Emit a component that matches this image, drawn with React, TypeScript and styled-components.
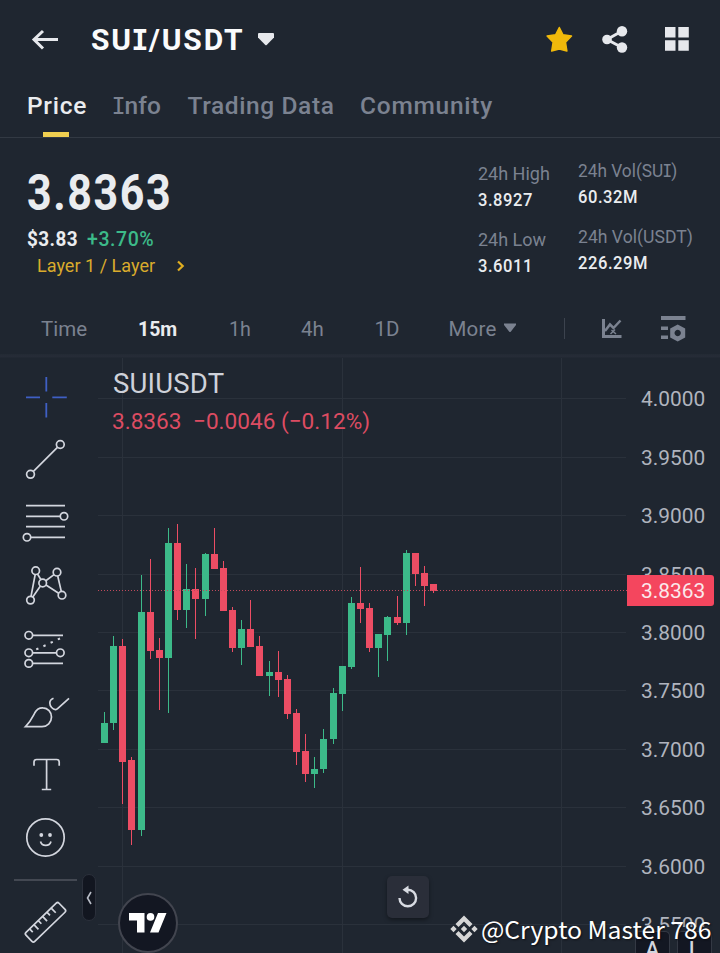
import React from "react";
import styled, { createGlobalStyle } from "styled-components";

const GlobalStyle = createGlobalStyle`
  * { box-sizing: border-box; }
  html, body { margin: 0; padding: 0; background: #1f2630; }
  body { font-family: Roboto, "Noto Sans", sans-serif; color: #eaecef; }
  svg { display: block; flex: none; }
`;

const Screen = styled.div`
  width: 720px;
  height: 953px;
  overflow: hidden;
  display: flex;
  flex-direction: column;
  background: #1f2630;
`;

/* Single-line label whose glyph width and tracking can be tuned. */
const Label = styled.span<{ $size: number; $weight?: number; $color?: string; $sx?: number; $ls?: number }>`
  display: block;
  white-space: pre;
  transform-origin: 0 50%;
  font-size: ${(p) => p.$size}px;
  font-weight: ${(p) => p.$weight ?? 400};
  color: ${(p) => p.$color ?? "#eaecef"};
  letter-spacing: ${(p) => p.$ls ?? 0}px;
  transform: scaleX(${(p) => p.$sx ?? 1});
`;

const SlabI = styled.span`
  font-family: "DejaVu Sans Mono", monospace;
  font-size: 0.96em;
  line-height: 0;
  margin: 0 -0.06em;
`;

const Header = styled.header`
  height: 79px;
  margin-bottom: 1px;
  flex: none;
  display: grid;
  grid-template-columns: 60px 167px 288px 56px 63px 30px;
  padding-left: 31px;
  align-items: center;
`;

const Tabs = styled.nav`
  height: 58px;
  flex: none;
  display: grid;
  grid-template-columns: 86px 74.5px 172.5px 160px;
  padding-left: 27px;
  border-bottom: 1px solid #323943;
`;

const Tab = styled.div`
  height: 57px;
  line-height: 51px;
  display: flex;
  flex-direction: column;
`;

const TabMark = styled.div`
  width: 26px;
  height: 5px;
  flex: none;
  margin: 1px 0 0 16px;
  background: #f0cf50;
`;

const Summary = styled.section`
  height: 162px;
  flex: none;
  display: grid;
  grid-template-columns: 451px 100px 140px;
  padding-left: 27px;
`;

const PriceColumn = styled.div`
  padding-top: 25px;
`;

const BigPrice = styled.div`
  height: 60px;
  line-height: 60px;
  margin-bottom: 2px;
`;

const ChangeRow = styled.div`
  display: grid;
  grid-template-columns: 60px 80px;
  line-height: 28px;
`;

const TagRow = styled.div`
  display: grid;
  grid-template-columns: 139px 10px;
  align-items: center;
  line-height: 26px;
  padding-left: 10px;
`;

const StatColumn = styled.div<{ $top: number }>`
  display: flex;
  flex-direction: column;
  gap: 14px;
  padding-top: ${(p) => p.$top}px;
  line-height: 26px;
`;

const Intervals = styled.div`
  height: 54px;
  flex: none;
  display: grid;
  grid-template-columns: 97px 90.5px 72.5px 73.5px 74px 55.5px 60px 38px 59px 30px;
  align-items: center;
  padding: 3px 0 0 41px;
`;

const Divider = styled.div`
  width: 1px;
  height: 21px;
  background: #3c434e;
`;

const Strip = styled.div`
  height: 4px;
  flex: none;
  background: linear-gradient(#232a34, #262c37 60%, #202731);
`;

const ChartPanel = styled.main`
  height: 595px;
  flex: none;
  display: grid;
  grid-template-columns: 98px 529px 93px;
  position: relative;
`;

const Tools = styled.aside`
  padding-top: 8px;
  svg { fill: none; stroke: #d3d6de; stroke-width: 1.7; }
`;

const ToolDivider = styled.div`
  height: 2px;
  width: 63px;
  margin: 9px 0 0 14px;
  background: #434852;
`;

const Collapse = styled.div`
  position: absolute;
  left: 82px;
  top: 516px;
  width: 14px;
  height: 47px;
  border-radius: 7px;
  background: #121620;
  border: 1px solid #2b303b;
  display: grid;
  place-items: center;
`;

const Legend = styled.div`
  position: absolute;
  left: 112px;
  top: 8px;
`;

const LegendTitle = styled.div`
  line-height: 36px;
  padding-left: 1px;
`;

const LegendValues = styled.div`
  display: grid;
  grid-template-columns: 81px 190px;
  line-height: 40px;
`;

const Scale = styled.div`
  display: grid;
  grid-template-rows: repeat(10, 58.44px);
  align-content: start;
  align-items: center;
  padding: 12px 0 0 14px;
  overflow: hidden;
`;

const PriceTag = styled.div`
  position: absolute;
  left: 627px;
  top: 217px;
  width: 87px;
  height: 31px;
  line-height: 32px;
  padding-left: 14px;
  border-radius: 0 3px 3px 0;
  background: #f4465e;
`;

const RoundLogo = styled.div`
  position: absolute;
  left: 118px;
  top: 535px;
  width: 60px;
  height: 60px;
  border-radius: 50%;
  background: #131722;
  border: 2px solid #42454f;
  display: grid;
  place-items: center;
`;

const ResetButton = styled.div`
  position: absolute;
  left: 387px;
  top: 518px;
  width: 42px;
  height: 42px;
  border-radius: 5px;
  background: #2a2e39;
  box-shadow: 0 2px 4px rgba(0, 0, 0, 0.4);
  display: grid;
  place-items: center;
`;

const ScaleModes = styled.div`
  position: absolute;
  left: 627px;
  right: 0;
  top: 569px;
  padding: 4px 0 0 8px;
  background: #1f2630;
  display: flex;
  gap: 7px;
`;

const ModeButton = styled.div`
  width: 35px;
  height: 22px;
  padding-top: 5px;
  overflow: hidden;
  border-radius: 5px 5px 0 0;
  border: 1px solid #343944;
  border-bottom: 0;
  background: #131722;
  color: #d3d6de;
  font-size: 20px;
  font-weight: 500;
  line-height: 24px;
  text-align: center;
`;

const Watermark = styled.div`
  position: absolute;
  left: 450px;
  top: 551px;
  height: 40px;
  display: flex;
  align-items: center;
  gap: 3px;
  line-height: 38px;
  font-family: "Noto Sans CJK SC", "Noto Sans", sans-serif;
  text-shadow: 1px 1px 2px rgba(0, 0, 0, 0.6);
`;

const GREEN = "#3cba89";
const RED = "#ec4d64";
const MUTED = "#7b8290";

/* left edge, body top, body bottom, wick top, wick bottom, rising */
const candles: [number, number, number, number, number, boolean][] = [
  [101, 723, 743, 712, 743, true],
  [110, 646, 723, 636, 730, true],
  [119, 646, 762, 639, 804, false],
  [128, 760, 830, 757, 845, false],
  [138, 612, 830, 575, 836, true],
  [147, 612, 651, 559, 659, false],
  [156, 650, 658, 638, 710, false],
  [165, 543, 658, 528, 713, true],
  [174, 543, 610, 524, 620, false],
  [183, 589, 610, 564, 628, true],
  [192, 589, 599, 568, 639, false],
  [202, 554, 599, 553, 616, true],
  [211, 554, 569, 528, 569, false],
  [220, 568, 611, 561, 611, false],
  [229, 610, 648, 607, 652, false],
  [238, 629, 648, 620, 665, true],
  [247, 629, 647, 600, 647, false],
  [256, 646, 676, 636, 676, false],
  [266, 672, 676, 661, 696, true],
  [275, 672, 680, 651, 697, false],
  [284, 679, 714, 675, 719, false],
  [293, 713, 752, 709, 765, false],
  [302, 751, 774, 734, 782, false],
  [311, 769, 774, 757, 788, true],
  [320, 739, 769, 729, 773, true],
  [330, 693, 739, 688, 744, true],
  [339, 666, 694, 666, 711, true],
  [348, 603, 667, 597, 669, true],
  [357, 603, 609, 567, 623, false],
  [366, 608, 648, 603, 652, false],
  [375, 634, 648, 634, 677, true],
  [384, 617, 635, 616, 661, true],
  [394, 617, 623, 596, 625, false],
  [403, 553, 623, 550, 635, true],
  [412, 553, 574, 553, 586, false],
  [421, 573, 586, 566, 606, false],
  [430, 584, 591, 584, 593, false],
];

const gridY = [398, 457, 515, 574, 632, 690, 749, 807, 866, 924];
const gridX = [122, 342, 561];
const scaleLabels = ["4.0000", "3.9500", "3.9000", "3.8500", "3.8000", "3.7500", "3.7000", "3.6500", "3.6000", "3.5500"];

const Chart = () => (
  <svg width="529" height="595" viewBox="98 358 529 595" shapeRendering="crispEdges">
    {gridY.map((y) => <rect key={y} x="98" y={y} width="528" height="1" fill="#2a313b" />)}
    {gridX.map((x) => <rect key={x} x={x} y="358" width="1" height="595" fill="#2a313b" />)}
    {candles.map(([x, t, b, wt, wb, up]) => (
      <g key={x} fill={up ? GREEN : RED}>
        <rect x={x + 3} y={wt} width="1" height={wb - wt} />
        <rect x={x} y={t} width="7" height={b - t} />
      </g>
    ))}
    <path d="M98 590.5H627" stroke="#c04a5c" strokeDasharray="1 2" />
  </svg>
);

const toolIcons = [
  <g stroke="#3f5fc4" strokeWidth="1.8"><path d="M46.3 11v14.5M46.3 37v14.5M26 31.3h14M52.3 31.3h14.5" /></g>,
  <g><circle cx="60.3" cy="15.5" r="3.9" /><circle cx="30.5" cy="45.3" r="3.9" /><path d="M57.4 18.4 33.4 42.4" /></g>,
  <g><path d="M26 13.7h39M26 24.3h34M26 34.7h39M31 45.3h34" /><circle cx="64" cy="24.3" r="3.7" /><circle cx="27" cy="45.3" r="3.7" /></g>,
  <g>
    <circle cx="35.7" cy="15.7" r="3.8" /><circle cx="57" cy="17.2" r="3.8" /><circle cx="42.7" cy="28" r="3.8" /><circle cx="30.5" cy="45.1" r="3.8" /><circle cx="62" cy="40.2" r="3.8" />
    <path d="M35.2 19.5 31 41.3M32.8 42 40.4 31M45.8 25.7 54 19.6M57.7 21 61.3 36.4M46 30 58.7 38.2M37.5 19 41 24.7" />
  </g>,
  <g>
    <path d="M33 17.3h30M33 34.8h23.5M33 45.4h30" /><circle cx="28.8" cy="17.3" r="3.8" /><circle cx="28.8" cy="34.8" r="3.8" /><circle cx="28.8" cy="45.4" r="3.8" /><circle cx="60.3" cy="34.8" r="3.8" />
    <path d="m36.2 31.4 2.2-.9M43.4 28.2l2.2-.9M50.6 24.8l2.2-.9M57.8 21.4l2.2-.9" strokeWidth="2" />
  </g>,
  <g><path d="M25.5 45.6C31 40 32.5 36 34.8 31.8 37 28 40 26.7 43 26.9c4.8.2 8.5 4.1 8.5 9.1 0 5.4-4.2 9.6-9.5 9.6zM53.5 17.3c-2 .8-3.7 2.5-3.7 4.7 0 3.4 3 6.5 5.7 6.6 1 .1 1.7-.5 2.4-1.2L69 17.300" /></g>,
  <g><path d="M34 21.7v-3.6q0-2.600 2.600-2.600h20q2.600 0 2.600 2.600v3.600M46.600 15.500v30M41.800 45.500h9.400" /></g>,
  <g><circle cx="45.5" cy="30.5" r="18.7" /><path d="M40.5 34.500c1.500 5.200 9 5.200 10.500 0" /><circle cx="41.3" cy="28" r="1.9" fill="#d3d6de" stroke="none" /><circle cx="50" cy="28" r="1.9" fill="#d3d6de" stroke="none" /></g>,
];

const Stat = ({ name, value, nsx = 1, vsx = 0.92 }: { name: React.ReactNode; value: string; nsx?: number; vsx?: number }) => (
  <div>
    <Label $size={18} $color={MUTED} $sx={nsx}>{name}</Label>
    <Label $size={18} $weight={500} $sx={vsx} $ls={0.6}>{value}</Label>
  </div>
);

export default function App() {
  return (
    <Screen>
      <GlobalStyle />
      <Header>
        <svg width="28" height="22" viewBox="0 0 28 22" fill="none" stroke="#e6e8ec" strokeWidth="3">
          <path d="M27 10.500H3M12 2 3 10.500l9 9" />
        </svg>
        <Label $size={30} $weight={700} $color="#fafbfc" $ls={1.85}>SU<SlabI>I</SlabI>/USDT</Label>
        <svg width="16" height="16" viewBox="0 0 16 16"><path d="M0 2q0-1 1-1h14q1 0 1 1v3.500L8.700 13q-.7.700-1.400 0L0 5.500z" fill="#e6e8ec" /></svg>
        <svg width="28" height="28" viewBox="0 0 28 28"><path d="m13.300 1.500 3.700 7.300 8.500 1.300-6 6.200 1.400 8.700-7.600-1.900-7.600 1.900 1.400-8.700-6-6.200 8.500-1.300z" fill="#f0b90b" stroke="#f0b90b" strokeWidth="1.500" strokeLinejoin="round" /></svg>
        <svg width="26" height="28" viewBox="0 0 26 28" fill="#e6e8ec"><path d="m5 13.500 15-8.500M5 13.500l15 8" stroke="#e6e8ec" strokeWidth="3" /><circle cx="5" cy="13.500" r="4.800" /><circle cx="20" cy="5.300" r="5.200" /><circle cx="20" cy="21.500" r="5.200" /></svg>
        <svg width="24" height="26" viewBox="0 0 24 26" fill="#e6e8ec"><path d="M0 0h10.500v10.500H0zM13.300 0h10.500v10.500H13.300zM0 13.300h10.500v10.500H0zM13.300 13.300h10.500v10.500H13.300z" /></svg>
      </Header>
      <Tabs>
        <Tab><Label $size={24.5} $weight={500} $ls={0.7}>Price</Label><TabMark /></Tab>
        <Tab><Label $size={24.5} $weight={500} $color={MUTED} $ls={0.1}><SlabI>I</SlabI>nfo</Label></Tab>
        <Tab><Label $size={24.5} $weight={500} $color={MUTED} $ls={0.6}>Trading Data</Label></Tab>
        <Tab><Label $size={24.5} $weight={500} $color={MUTED} $ls={0.75}>Community</Label></Tab>
      </Tabs>
      <Summary>
        <PriceColumn>
          <BigPrice><Label $size={50} $weight={700} $sx={0.86} $ls={1.8}>3.8363</Label></BigPrice>
          <ChangeRow>
            <Label $size={21} $weight={700} $sx={0.9} $ls={0.5}>$3.83</Label>
            <Label $size={21} $weight={500} $color={GREEN} $sx={0.93} $ls={0.6}>+3.70%</Label>
          </ChangeRow>
          <TagRow>
            <Label $size={18.5} $color="#d9ab2c" $sx={0.976}>Layer 1 / Layer</Label>
            <svg width="9" height="12" viewBox="0 0 9 12" fill="none" stroke="#e0ae20" strokeWidth="2.200"><path d="m2 1.500 4.700 4.500L2 10.500" /></svg>
          </TagRow>
        </PriceColumn>
        <StatColumn $top={23}>
          <Stat name="24h High" value="3.8927" />
          <Stat name="24h Low" value="3.6011" />
        </StatColumn>
        <StatColumn $top={20}>
          <Stat name={<>24h Vol(SU<SlabI>I</SlabI>)</>} value="60.32M" nsx={0.96} />
          <Stat name="24h Vol(USDT)" value="226.29M" nsx={0.978} />
        </StatColumn>
      </Summary>
      <Intervals>
        <Label $size={20.5} $color={MUTED}>Time</Label>
        <Label $size={20.5} $weight={700} $sx={0.95}>15m</Label>
        <Label $size={20.5} $color={MUTED} $sx={0.96}>1h</Label>
        <Label $size={20.5} $color={MUTED}>4h</Label>
        <Label $size={20.5} $color={MUTED}>1D</Label>
        <Label $size={20.5} $color={MUTED} $ls={0.2}>More</Label>
        <svg width="12" height="12" viewBox="0 0 12 12"><path d="M0 .5h12v1.500L6.500 9h-1L0 2z" fill={MUTED} /></svg>
        <Divider />
        <svg width="20" height="20" viewBox="0 0 20 20" fill="none" stroke={MUTED}><path d="M1.500 0v17.500H19.500" strokeWidth="3" /><path d="M3 12 8 5.500l3.500 3.500L18.500 1.500" strokeWidth="2.500" /><path d="M13 10.500 8.500 15M9.500 11l4.500 4" strokeWidth="1.500" /></svg>
        <svg width="25" height="26" viewBox="0 0 25 26"><path d="M0 0h24.500v4H0zM0 10.500h7v3.500H0zM0 19.500h7V23H0z" fill={MUTED} /><path fillRule="evenodd" d="m16.700 8.500 7.500 4v9l-7.500 4-7.500-4v-9zM16.700 13.800a3.200 3.200 0 1 0 .01 0z" fill={MUTED} /></svg>
      </Intervals>
      <Strip />
      <ChartPanel>
        <Tools>
          {toolIcons.map((icon, i) => <svg key={i} width="96" height="63" viewBox="0 0 96 63">{icon}</svg>)}
          <ToolDivider />
          <svg width="96" height="72" viewBox="0 881 96 72">
            <g transform="rotate(-44 45.500 922.300)">
              <rect x="22.500" y="916" width="46" height="12.600" rx="2" />
              <path d="M29.500 916v4.500M35.500 916v6.500M41.500 916v4.500M47.500 916v6.500M53.500 916v4.500M59.500 916v6.500" />
            </g>
          </svg>
        </Tools>
        <Chart />
        <Scale>
          {scaleLabels.map((t) => <Label key={t} $size={20.9} $color="#b0b4be">{t}</Label>)}
        </Scale>
        <Legend>
          <LegendTitle><Label $size={27.5} $color="#cfd2da" $ls={0.2}>SUIUSDT</Label></LegendTitle>
          <LegendValues>
            <Label $size={22.6} $color="#dc4c62">3.8363</Label>
            <Label $size={22.6} $color="#dc4c62">−0.0046 (−0.12%)</Label>
          </LegendValues>
        </Legend>
        <PriceTag><Label $size={20.9} $color="#fbe9ec">3.8363</Label></PriceTag>
        <Collapse>
          <svg width="6" height="14" viewBox="0 0 6 14" fill="none" stroke="#b9bdc7" strokeWidth="1.600"><path d="M5 1 1.500 7 5 13" /></svg>
        </Collapse>
        <RoundLogo>
          <svg width="38" height="20" viewBox="0 0 38 20" fill="#fff"><path d="M0 0h15.500v19.500H8v-12H0zM29 0h8.500L29.500 19.500H21z" /><circle cx="21.500" cy="3.900" r="3.800" /></svg>
        </RoundLogo>
        <ResetButton>
          <svg width="20" height="24" viewBox="0 0 20 24" fill="none" stroke="#d8dbe2" strokeWidth="2.400"><path d="M1.500 13a8.300 8.300 0 1 0 8.300-8.300H7" /><path d="M10.500.5V9L4.500 4.700z" fill="#d8dbe2" stroke="none" /></svg>
        </ResetButton>
        <ScaleModes>
          <ModeButton>A</ModeButton>
          <ModeButton>L</ModeButton>
        </ScaleModes>
        <Watermark>
          <svg width="28" height="28" viewBox="-14 -14 28 28" fill="#d6d6d6"><path d="M0-13.500 8.500-5 5.500-2 0-7.500-5.500-2-8.500-5zM0 13.500 8.500 5 5.500 2 0 7.500-5.500 2-8.500 5zM0-3.200 3.200 0 0 3.200-3.200 0zM-10.500-3.200-7.300 0l-3.200 3.200L-13.700 0zM10.500-3.200 13.700 0l-3.200 3.200L7.300 0z" /></svg>
          <Label $size={24} $color="#fff" $sx={1.029}>@Crypto Master 786</Label>
        </Watermark>
      </ChartPanel>
    </Screen>
  );
}
